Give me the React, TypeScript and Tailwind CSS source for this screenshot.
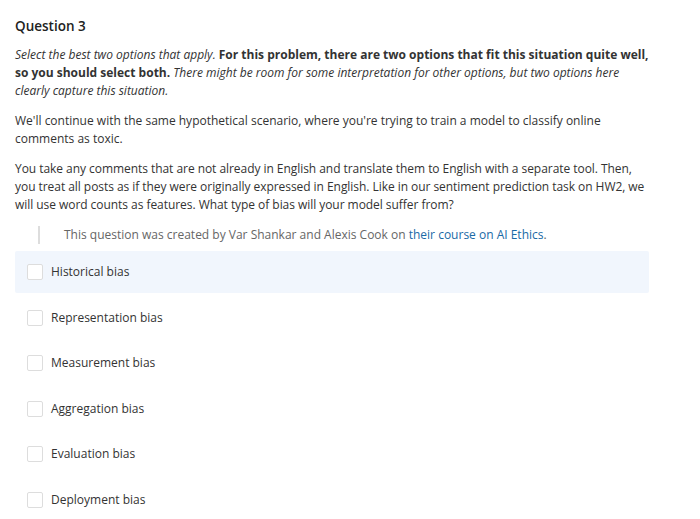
import React from "react";

const options = [
  "Historical bias",
  "Representation bias",
  "Measurement bias",
  "Aggregation bias",
  "Evaluation bias",
  "Deployment bias",
];

export default function App() {
  return (
    <div className="w-[700px] h-[519px] bg-white text-[#333] font-['Open_Sans',sans-serif] overflow-hidden">
      <div className="pl-[15px] pt-[16px]">
        <div className="w-[640px]">
          <div className="text-[13.5px] leading-[20px] font-semibold text-[#222]">Question 3</div>
          <p className="mt-[10px] text-[12px] leading-[18px]">
            <em>Select the best two options that apply.</em>{" "}
            <strong className="font-bold">For this problem, there are two options that fit this situation quite well, so you should select both.</strong>{" "}
            <em>There might be room for some interpretation for other options, but two options here clearly capture this situation.</em>
          </p>
          <p className="mt-[12px] text-[12px] leading-[18px]">
            We'll continue with the same hypothetical scenario, where you're trying to train a model to classify online comments as toxic.
          </p>
          <p className="mt-[12px] text-[12px] leading-[18px] tracking-[-0.05px]">
            You take any comments that are not already in English and translate them to English with a separate tool. Then, you treat all posts as if they were originally expressed in English. Like in our sentiment prediction task on HW2, we will use word counts as features. What type of bias will your model suffer from?
          </p>
          <div className="mt-[12px] ml-[23px] border-l-2 border-[#ddd] pl-[24px] text-[12px] leading-[18px] text-[#666]">
            This question was created by Var Shankar and Alexis Cook on{" "}
            <span className="text-[#1a6aa6]">their course on AI Ethics</span>.
          </div>
        </div>
        <div className="mt-[7px] w-[634px] flex flex-col">
          {options.map((o, i) => (
            <div
              key={o}
              className={`h-[42px] flex items-center pl-[12px] rounded-[2px] ${i === 0 ? "bg-[#f1f6fd]" : ""} ${i > 0 ? "mt-[3.5px]" : ""}`}
            >
              <span className="w-[16px] h-[16px] border border-[#ddd] rounded-[2px] bg-white" />
              <span className="ml-[8px] text-[12px] text-[#333]">{o}</span>
            </div>
          ))}
        </div>
      </div>
    </div>
  );
}
